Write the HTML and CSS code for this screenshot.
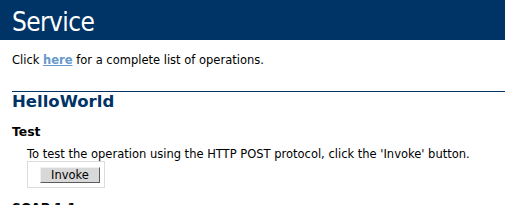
FILE: index.html
```html
<!DOCTYPE html>
<html lang="en">
<head>
    <meta charset="UTF-8">
    <title>Service Web Service</title>
    <link rel="stylesheet" href="styles.css">
</head>
<body>
    <div class="heading1">Service</div>

    <div id="content">
        <p class="intro">Click <a href="#">here</a> for a complete list of operations.</p>

        <h2>HelloWorld</h2>

        <h3>Test</h3>
        <div class="frame">
            <p class="note">To test the operation using the HTTP POST protocol, click the 'Invoke' button.</p>
            <form class="invoke-form">
                <input type="submit" value="Invoke" class="button">
            </form>
        </div>

        <h3 class="soap">SOAP 1.1</h3>
    </div>
</body>
</html>
```

FILE: styles.css
```css
body {
    color: #000000;
    background-color: white;
    font-family: "DejaVu Sans", Verdana, sans-serif;
    margin: 0;
}

.heading1 {
    color: #ffffff;
    font-family: "DejaVu Sans Condensed", "DejaVu Sans", Tahoma, sans-serif;
    font-size: 26px;
    letter-spacing: -0.6px;
    background-color: #003366;
    height: 40px;
    box-sizing: border-box;
    padding: 7px 0 0 12px;
    line-height: 30px;
}

#content {
    font-size: 11.5px;
    line-height: 14px;
    padding-left: 12px;
}

a:link,
a:visited {
    color: #6699cc;
    font-weight: bold;
    text-decoration: underline;
}

.intro {
    margin: 13px 0 0 0;
}

h2 {
    font-size: 16.5px;
    line-height: 20px;
    font-weight: bold;
    color: #003366;
    border-top: 1px solid #003366;
    margin: 24px 0 0 0;
    padding: 0;
}

h3 {
    font-size: 12.4px;
    line-height: 15px;
    font-weight: bold;
    margin: 12px 0 0 0;
}

.frame {
    padding-left: 15px;
}

.note {
    margin: 8px 0 0 0;
}

.invoke-form {
    display: inline-flex;
    border: 1px solid #dcdcdc;
    padding: 5px 4px 4px 12px;
    margin: 0;
}

.button {
    font-family: "DejaVu Sans", Verdana, sans-serif;
    font-size: 11.5px;
    line-height: 14px;
    width: 60px;
    height: 16px;
    box-sizing: border-box;
    padding: 0;
    background-color: #d8d8d8;
    border: 1px solid #f0f0f0;
    border-right-color: #5a5a5a;
    border-bottom-color: #5a5a5a;
    border-radius: 0;
    color: #000000;
}

.soap {
    margin-top: 12px;
}
```
